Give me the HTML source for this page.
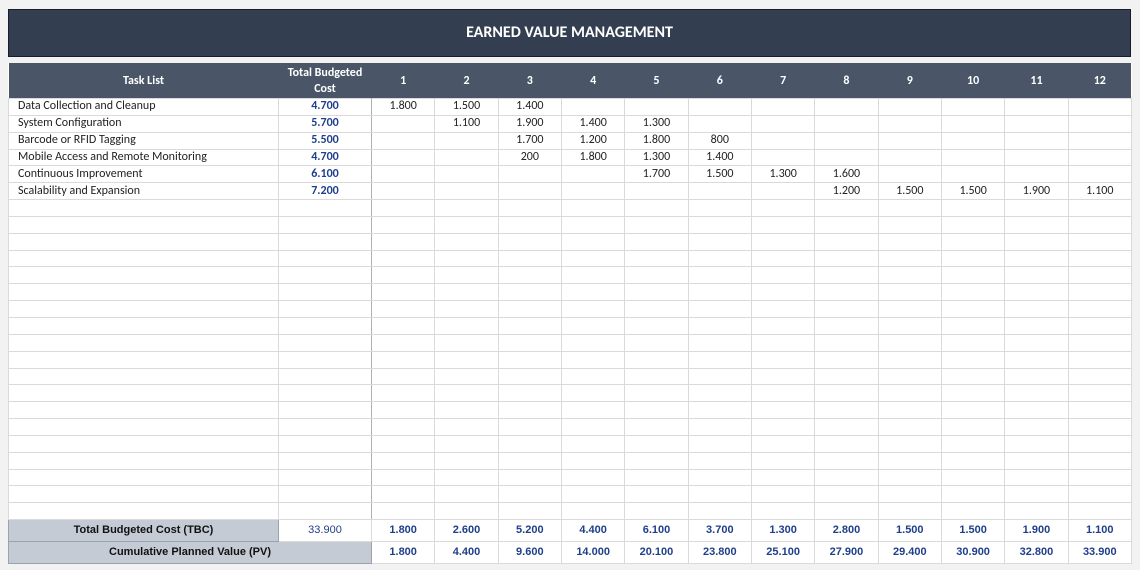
<!DOCTYPE html>
<html><head><meta charset="utf-8"><style>
body{margin:0;width:1140px;height:570px;background:#f2f2f2;font-family:Calibri,"Liberation Sans",sans-serif;overflow:hidden;position:relative}
.title{position:absolute;left:8px;top:9px;width:1121px;height:46px;background:#333f50;border:1px solid #1a1f27;color:#fff;font-weight:bold;font-size:16px;text-align:center;line-height:46px}
table{position:absolute;left:8px;top:63px;border-collapse:collapse;table-layout:fixed;width:1123px;background:#fff;font-size:12px}
td{border:1px solid #dadada;padding:0;height:15.85px;line-height:15px;text-align:center;color:#222;white-space:nowrap;overflow:hidden}
th{background:#4a5667;color:#fff;font-weight:bold;font-size:12px;height:33px;border:none;line-height:16px}
td.t{text-align:left;padding-left:9px}
td.b{color:#1f3f8a;font-weight:bold}
td.v{border-right:1px solid #b0b0b0}
tr.f td{height:21px;font-family:"Liberation Sans",sans-serif;font-size:11px}
td.g{background:#c5cbd4;font-weight:bold;color:#111;border:1px solid #9aa2ad}
</style></head><body>
<div class="title">EARNED VALUE MANAGEMENT</div>
<table>
<colgroup><col style="width:270px"><col style="width:93px"><col span="12" style="width:63.33px"></colgroup>
<tr><th>Task List</th><th>Total Budgeted<br>Cost</th><th>1</th><th>2</th><th>3</th><th>4</th><th>5</th><th>6</th><th>7</th><th>8</th><th>9</th><th>10</th><th>11</th><th>12</th></tr>
<tr><td class="t">Data Collection and Cleanup</td><td class="b v">4.700</td><td>1.800</td><td>1.500</td><td>1.400</td><td></td><td></td><td></td><td></td><td></td><td></td><td></td><td></td><td></td></tr>
<tr><td class="t">System Configuration</td><td class="b v">5.700</td><td></td><td>1.100</td><td>1.900</td><td>1.400</td><td>1.300</td><td></td><td></td><td></td><td></td><td></td><td></td><td></td></tr>
<tr><td class="t">Barcode or RFID Tagging</td><td class="b v">5.500</td><td></td><td></td><td>1.700</td><td>1.200</td><td>1.800</td><td>800</td><td></td><td></td><td></td><td></td><td></td><td></td></tr>
<tr><td class="t">Mobile Access and Remote Monitoring</td><td class="b v">4.700</td><td></td><td></td><td>200</td><td>1.800</td><td>1.300</td><td>1.400</td><td></td><td></td><td></td><td></td><td></td><td></td></tr>
<tr><td class="t">Continuous Improvement</td><td class="b v">6.100</td><td></td><td></td><td></td><td></td><td>1.700</td><td>1.500</td><td>1.300</td><td>1.600</td><td></td><td></td><td></td><td></td></tr>
<tr><td class="t">Scalability and Expansion</td><td class="b v">7.200</td><td></td><td></td><td></td><td></td><td></td><td></td><td></td><td>1.200</td><td>1.500</td><td>1.500</td><td>1.900</td><td>1.100</td></tr>
<tr><td></td><td class="v"></td><td></td><td></td><td></td><td></td><td></td><td></td><td></td><td></td><td></td><td></td><td></td><td></td></tr>
<tr><td></td><td class="v"></td><td></td><td></td><td></td><td></td><td></td><td></td><td></td><td></td><td></td><td></td><td></td><td></td></tr>
<tr><td></td><td class="v"></td><td></td><td></td><td></td><td></td><td></td><td></td><td></td><td></td><td></td><td></td><td></td><td></td></tr>
<tr><td></td><td class="v"></td><td></td><td></td><td></td><td></td><td></td><td></td><td></td><td></td><td></td><td></td><td></td><td></td></tr>
<tr><td></td><td class="v"></td><td></td><td></td><td></td><td></td><td></td><td></td><td></td><td></td><td></td><td></td><td></td><td></td></tr>
<tr><td></td><td class="v"></td><td></td><td></td><td></td><td></td><td></td><td></td><td></td><td></td><td></td><td></td><td></td><td></td></tr>
<tr><td></td><td class="v"></td><td></td><td></td><td></td><td></td><td></td><td></td><td></td><td></td><td></td><td></td><td></td><td></td></tr>
<tr><td></td><td class="v"></td><td></td><td></td><td></td><td></td><td></td><td></td><td></td><td></td><td></td><td></td><td></td><td></td></tr>
<tr><td></td><td class="v"></td><td></td><td></td><td></td><td></td><td></td><td></td><td></td><td></td><td></td><td></td><td></td><td></td></tr>
<tr><td></td><td class="v"></td><td></td><td></td><td></td><td></td><td></td><td></td><td></td><td></td><td></td><td></td><td></td><td></td></tr>
<tr><td></td><td class="v"></td><td></td><td></td><td></td><td></td><td></td><td></td><td></td><td></td><td></td><td></td><td></td><td></td></tr>
<tr><td></td><td class="v"></td><td></td><td></td><td></td><td></td><td></td><td></td><td></td><td></td><td></td><td></td><td></td><td></td></tr>
<tr><td></td><td class="v"></td><td></td><td></td><td></td><td></td><td></td><td></td><td></td><td></td><td></td><td></td><td></td><td></td></tr>
<tr><td></td><td class="v"></td><td></td><td></td><td></td><td></td><td></td><td></td><td></td><td></td><td></td><td></td><td></td><td></td></tr>
<tr><td></td><td class="v"></td><td></td><td></td><td></td><td></td><td></td><td></td><td></td><td></td><td></td><td></td><td></td><td></td></tr>
<tr><td></td><td class="v"></td><td></td><td></td><td></td><td></td><td></td><td></td><td></td><td></td><td></td><td></td><td></td><td></td></tr>
<tr><td></td><td class="v"></td><td></td><td></td><td></td><td></td><td></td><td></td><td></td><td></td><td></td><td></td><td></td><td></td></tr>
<tr><td></td><td class="v"></td><td></td><td></td><td></td><td></td><td></td><td></td><td></td><td></td><td></td><td></td><td></td><td></td></tr>
<tr><td></td><td class="v"></td><td></td><td></td><td></td><td></td><td></td><td></td><td></td><td></td><td></td><td></td><td></td><td></td></tr>
<tr class="f"><td class="g">Total Budgeted Cost (TBC)</td><td style="color:#1f3f8a">33.900</td><td class="b">1.800</td><td class="b">2.600</td><td class="b">5.200</td><td class="b">4.400</td><td class="b">6.100</td><td class="b">3.700</td><td class="b">1.300</td><td class="b">2.800</td><td class="b">1.500</td><td class="b">1.500</td><td class="b">1.900</td><td class="b">1.100</td></tr>
<tr class="f"><td class="g" colspan="2">Cumulative Planned Value (PV)</td><td class="b">1.800</td><td class="b">4.400</td><td class="b">9.600</td><td class="b">14.000</td><td class="b">20.100</td><td class="b">23.800</td><td class="b">25.100</td><td class="b">27.900</td><td class="b">29.400</td><td class="b">30.900</td><td class="b">32.800</td><td class="b">33.900</td></tr>
</table>
</body></html>
